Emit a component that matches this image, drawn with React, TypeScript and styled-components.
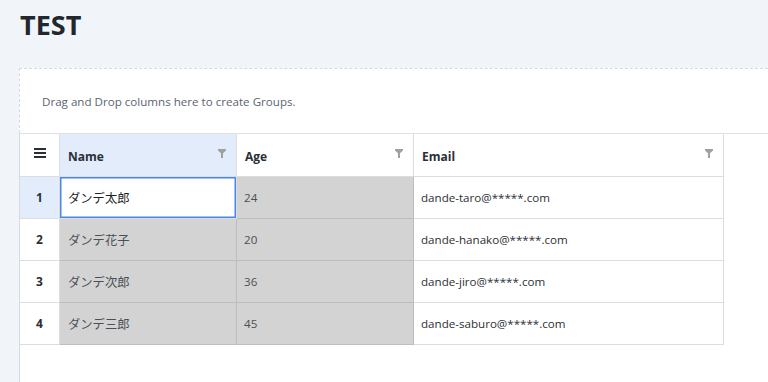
import React from "react";
import styled, { createGlobalStyle } from "styled-components";

const GlobalStyle = createGlobalStyle`
  html, body {
    margin: 0;
    padding: 0;
    background: #f1f5f9;
    font-family: "Open Sans", "Noto Sans CJK JP", sans-serif;
  }
`;

type Person = { id: number; name: string; age: number; email: string };

const people: Person[] = [
  { id: 1, name: "ダンデ太郎", age: 24, email: "dande-taro@*****.com" },
  { id: 2, name: "ダンデ花子", age: 20, email: "dande-hanako@*****.com" },
  { id: 3, name: "ダンデ次郎", age: 36, email: "dande-jiro@*****.com" },
  { id: 4, name: "ダンデ三郎", age: 45, email: "dande-saburo@*****.com" },
];

const columns = [
  { key: "name", label: "Name", active: true },
  { key: "age", label: "Age", active: false },
  { key: "email", label: "Email", active: false },
];

function FilterIcon() {
  return (
    <svg width="8" height="9" viewBox="0 0 8 9">
      <path d="M0 0h8v1.6L5 4.2V9H3V4.2L0 1.6z" fill="#a0a0a0" />
    </svg>
  );
}

function MenuIcon() {
  return (
    <svg width="12" height="10" viewBox="0 0 12 10">
      <rect x="0" y="0" width="12" height="2" fill="#2b2f36" />
      <rect x="0" y="4" width="12" height="2" fill="#2b2f36" />
      <rect x="0" y="8" width="12" height="2" fill="#2b2f36" />
    </svg>
  );
}

function App() {
  return (
    <>
      <GlobalStyle />
      <Page>
        <Title>TEST</Title>
        <Panel>
          <GroupArea>Drag and Drop columns here to create Groups.</GroupArea>
          <GridArea>
            <Grid>
              <HeadCell $center>
                <MenuIcon />
              </HeadCell>
              {columns.map((col) => (
                <HeadCell key={col.key} $active={col.active}>
                  <span>{col.label}</span>
                  <FilterIcon />
                </HeadCell>
              ))}
              {people.map((p) => (
                <React.Fragment key={p.id}>
                  <RowNum $selected={p.id === 1}>{p.id}</RowNum>
                  <Cell $grey={p.id !== 1} $focused={p.id === 1} $jp>
                    {p.name}
                  </Cell>
                  <Cell $grey>{p.age}</Cell>
                  <Cell>{p.email}</Cell>
                </React.Fragment>
              ))}
            </Grid>
          </GridArea>
        </Panel>
      </Page>
    </>
  );
}

export default App;

const Page = styled.div`
  height: 382px;
  overflow: hidden;
  padding-left: 19px;
  display: flex;
  flex-direction: column;
`;

const Title = styled.h1`
  margin: 0;
  padding: 6px 0 0 1px;
  height: 62px;
  font-size: 27px;
  font-weight: 700;
  color: #22262d;
  line-height: 38px;
`;

const Panel = styled.div`
  flex: 1;
  background: #ffffff;
  display: flex;
  flex-direction: column;
`;

const GroupArea = styled.div`
  height: 63px;
  border-top: 1px dashed #d4dae1;
  border-left: 1px dashed #d4dae1;
  display: flex;
  align-items: center;
  padding-left: 22px;
  padding-top: 1px;
  font-size: 11.6px;
  color: #5b6470;
`;

const GridArea = styled.div`
  flex: 1;
  border-top: 1px solid #dfe2e6;
  border-left: 1px solid #d6d9dd;
`;

const Grid = styled.div`
  display: grid;
  grid-template-columns: 40px 177px 177px 310px;
  grid-template-rows: 43px;
  grid-auto-rows: 42px;
  width: 704px;
`;

const HeadCell = styled.div<{ $active?: boolean; $center?: boolean }>`
  display: flex;
  align-items: center;
  justify-content: ${({ $center }) => ($center ? "center" : "space-between")};
  padding: ${({ $center }) => ($center ? "0" : "0 10px 0 8px")};
  background: ${({ $active }) => ($active ? "#e2ecfb" : "#ffffff")};
  border-right: 1px solid #dadde1;
  border-bottom: 1px solid #dadde1;
  font-size: 12px;
  font-weight: 700;
  color: #2b2f36;
  padding-top: 2px;
  & > svg:last-child {
    margin-top: -6px;
  }
`;

const RowNum = styled.div<{ $selected?: boolean }>`
  display: flex;
  align-items: center;
  justify-content: center;
  background: ${({ $selected }) => ($selected ? "#e2ecfb" : "#ffffff")};
  border-right: 1px solid #dadde1;
  border-bottom: 1px solid #dadde1;
  font-size: 12px;
  font-weight: 700;
  color: #2b2f36;
`;

const Cell = styled.div<{ $grey?: boolean; $focused?: boolean; $jp?: boolean }>`
  display: flex;
  align-items: center;
  padding-left: ${({ $jp }) => ($jp ? "8px" : "7px")};
  background: ${({ $grey }) => ($grey ? "#d3d3d3" : "#ffffff")};
  border-right: 1px solid ${({ $grey }) => ($grey ? "#bdbdbd" : "#dadde1")};
  border-bottom: 1px solid ${({ $grey }) => ($grey ? "#bdbdbd" : "#dadde1")};
  box-shadow: ${({ $focused }) => ($focused ? "inset 0 0 0 1.5px #4a88e6" : "none")};
  font-size: ${({ $jp }) => ($jp ? "12.3px" : "11.6px")};
  color: ${({ $focused, $grey }) => ($focused ? "#1f2328" : $grey ? "#4a4f57" : "#2b2f36")};
`;
